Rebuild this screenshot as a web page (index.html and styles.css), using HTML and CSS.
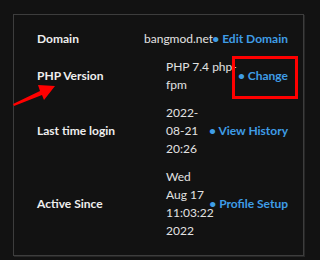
FILE: index.html
```html
<!DOCTYPE html>
<html lang="en">
<head>
    <meta charset="UTF-8">
    <meta name="viewport" content="width=device-width, initial-scale=1.0">
    <title>Account info</title>
    <link rel="stylesheet" href="styles.css">
</head>
<body>
    <div class="panel">
        <div class="row">
            <div class="label">Domain</div>
            <div class="value value-tight">bangmod.net</div>
            <a class="action" href="#">• Edit Domain</a>
        </div>

        <div class="row">
            <div class="label">PHP Version</div>
            <div class="value">PHP 7.4 php-fpm</div>
            <a class="action marked" href="#">• Change</a>
        </div>

        <div class="row">
            <div class="label">Last time login</div>
            <div class="value">2022-08-21 20:26</div>
            <a class="action" href="#">• View History</a>
        </div>

        <div class="row">
            <div class="label">Active Since</div>
            <div class="value">Wed Aug 17 11:03:22 2022</div>
            <a class="action" href="#">• Profile Setup</a>
        </div>

        <!-- arrow pointing at PHP Version -->
        <svg class="pointer" width="44" height="24" viewBox="0 0 44 24">
            <polygon points="0,19 27,6 25,0 42,1 31,15 29,10 1,21" fill="#ff0000"/>
        </svg>
    </div>
</body>
</html>
```

FILE: styles.css
```css
body {
    margin: 0;
    padding: 14px 16px 3px 13px;
    background-color: #121212;
    font-family: 'Lato', sans-serif;
    font-size: 12px;
    color: #e6e6e6;
}
.panel {
    position: relative;
    border: 1px solid #3d3d3d;
    box-shadow: 1px 1px 0 #262626;
    padding: 10px 15px 10px 23px;
}
.row {
    display: flex;
    align-items: center;
    padding: 5px 0;
    line-height: 18px;
}
.label {
    flex: 0 0 107px;
    font-weight: 700;
    color: #eeeeee;
}
.value {
    flex: 1;
    min-width: 0;
    padding-left: 22px;
    color: #e2e2e2;
}
.value-tight {
    padding-left: 0;
}
.action {
    flex: none;
    color: #3f9de6;
    font-weight: 700;
    text-decoration: none;
}
.marked {
    position: relative;
}
.marked::after {
    content: "";
    position: absolute;
    left: -6px;
    right: -10px;
    top: -11px;
    bottom: -14px;
    border: 3px solid #ff0000;
}
.pointer {
    position: absolute;
    left: -1px;
    top: 70px;
}
```
